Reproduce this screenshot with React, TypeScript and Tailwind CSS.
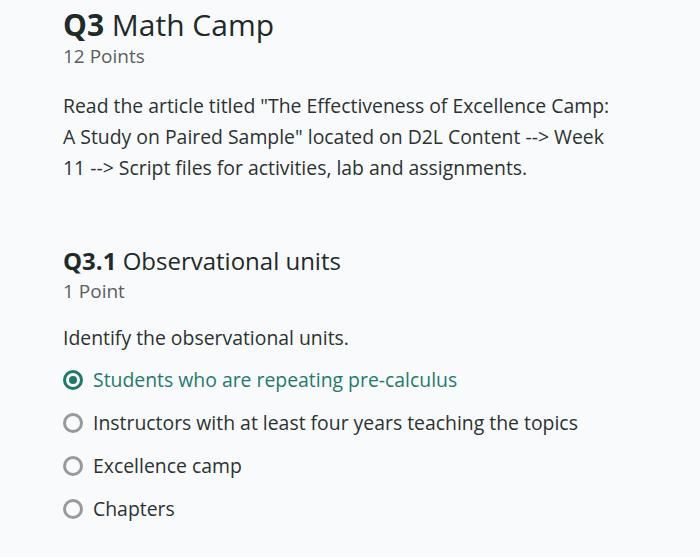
import React from 'react';

const options = [
  'Students who are repeating pre-calculus',
  'Instructors with at least four years teaching the topics',
  'Excellence camp',
  'Chapters',
];

export default function App() {
  const selected = 0;
  return (
    <div className="min-h-[557px] bg-[#f9fafb] px-[63px] pt-[7px] text-[#2b3332] font-['Open_Sans','Noto_Sans',sans-serif]">
      <h1 className="text-[30px] leading-[36px] text-[#1d2b29]">
        <span className="font-bold">Q3</span> Math Camp
      </h1>
      <div className="text-[19px] leading-[26px] text-[#5a5f60]">12 Points</div>

      <p className="mt-[21px] text-[19.4px] leading-[31px] text-[#2b3332]">
        Read the article titled "The Effectiveness of Excellence Camp:
        <br />
        A Study on Paired Sample" located on D2L Content --&gt; Week
        <br />
        11 --&gt; Script files for activities, lab and assignments.
      </p>

      <h2 className="mt-[61px] text-[24px] leading-[34px] text-[#1d2b29]">
        <span className="font-bold">Q3.1</span> Observational units
      </h2>
      <div className="text-[19px] leading-[26px] text-[#5a5f60]">1 Point</div>

      <div className="mt-[20px] text-[19.4px] leading-[28px]">Identify the observational units.</div>

      <div className="mt-[14px] flex flex-col gap-[15px]">
        {options.map((opt, i) => (
          <label key={opt} className="flex items-center gap-[10px] h-[28px]">
            {i === selected ? (
              <span className="flex items-center justify-center w-[20px] h-[20px] rounded-full border-[3px] border-[#1f7a6e]">
                <span className="w-[8px] h-[8px] rounded-full bg-[#1f7a6e]" />
              </span>
            ) : (
              <span className="w-[20px] h-[20px] rounded-full border-[3px] border-[#959a9b]" />
            )}
            <span className={`text-[19.4px] ${i === selected ? 'text-[#1f7a6e]' : 'text-[#2b3332]'}`}>{opt}</span>
          </label>
        ))}
      </div>
    </div>
  );
}
